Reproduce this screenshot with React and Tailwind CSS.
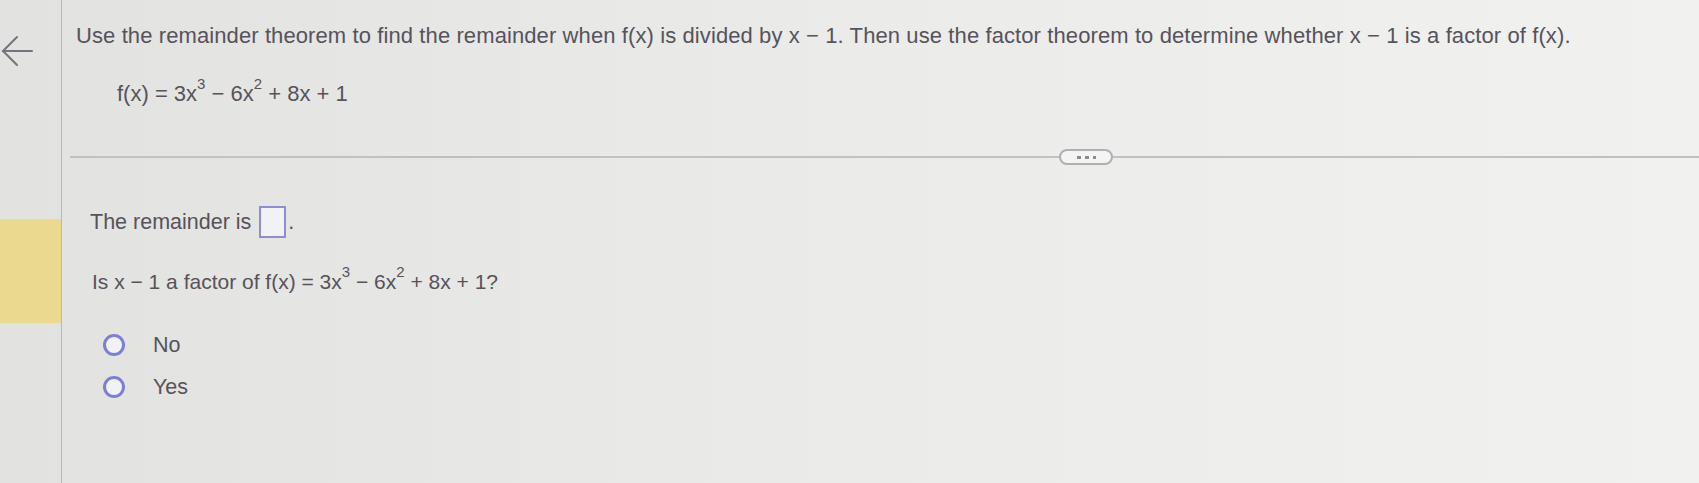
function Sup({ children }) {
  return <sup className="relative -top-[4px] text-[15px] align-super leading-none">{children}</sup>;
}

function Poly() {
  return (
    <span>
      f(x) = 3x<Sup>3</Sup> − 6x<Sup>2</Sup> + 8x + 1
    </span>
  );
}

function Radio({ label }) {
  return (
    <label className="flex items-center gap-[28px] h-[23px]">
      <span className="w-[22px] h-[22px] rounded-full border-[3px] border-[#7b7fd6] bg-[#f1f1f6]" />
      <span>{label}</span>
    </label>
  );
}

export default function App() {
  return (
    <div
      className="w-[1699px] h-[483px] flex overflow-hidden text-[#56535b] bg-gradient-to-r from-[#e2e2e0] via-[#ebebea] to-[#f1f1ef]"
      style={{ fontFamily: '"Liberation Sans", Arial, sans-serif' }}
    >
      {/* left rail */}
      <aside className="w-[62px] shrink-0 border-r border-[#b9b9bd] flex flex-col">
        <div className="pt-[35px] pl-[1px]">
          <svg width="32" height="32" viewBox="0 0 32 32" fill="none" stroke="#77737d" strokeWidth="2" strokeLinecap="round">
            <path d="M31 16H2" />
            <path d="M16 2L2 16l14 14" />
          </svg>
        </div>
        <div className="mt-[152px] h-[104px] bg-[#ead98f]" />
      </aside>

      {/* main */}
      <main className="flex-1 flex flex-col text-[21.5px] leading-[24px]">
        <p className="pt-[24px] pl-[14px] text-[22px] tracking-[0.1px]">
          Use the remainder theorem to find the remainder when f(x) is divided by x − 1. Then use the factor theorem to determine whether x − 1 is a factor of f(x).
        </p>
        <p className="mt-[32px] pl-[55px] text-[22px]">
          <Poly />
        </p>

        <div className="relative mt-[50px] ml-[8px] border-t-2 border-[#c2c0c4]">
          <div className="absolute left-[989px] -top-[9px] w-[54px] h-[16px] rounded-full border-2 border-[#b1afb3] bg-[#f4f4f2] flex items-center justify-center gap-[4px]">
            <span className="w-[4px] h-[3px] bg-[#8d8b92]" />
            <span className="w-[4px] h-[3px] bg-[#8d8b92]" />
            <span className="w-[3px] h-[3px] bg-[#8d8b92]" />
          </div>
        </div>

        <div className="mt-[48px] pl-[28px] flex items-center">
          <span>The remainder is</span>
          <span className="ml-[8px] w-[27px] h-[32px] border-2 border-[#8e8fcc] bg-[#f2f2f4]" />
          <span className="ml-[2px]">.</span>
        </div>

        <p className="mt-[30px] pl-[30px] text-[21px]">
          Is x − 1 a factor of <Poly />?
        </p>

        <div className="mt-[39px] pl-[41px] flex flex-col gap-[19px]">
          <Radio label="No" />
          <Radio label="Yes" />
        </div>
      </main>
    </div>
  );
}
